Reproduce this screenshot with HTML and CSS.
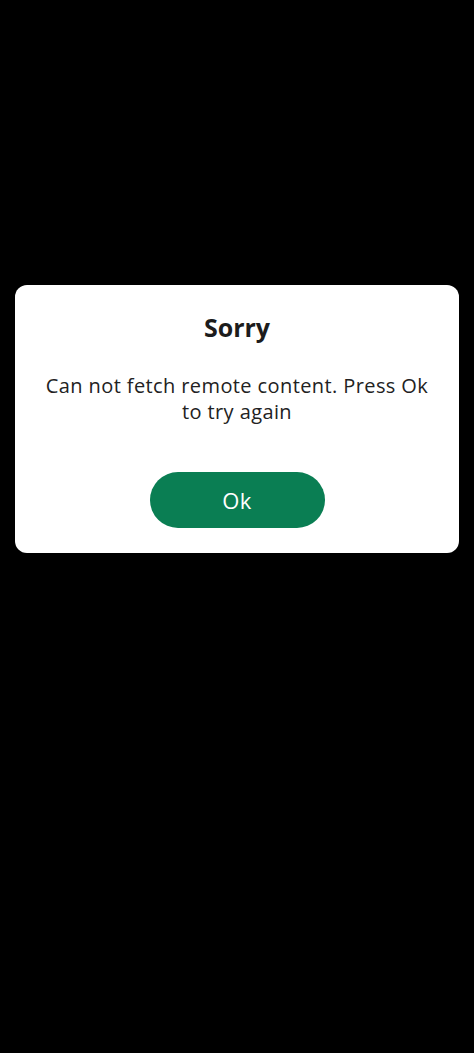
FILE: index.html
```html
<!DOCTYPE html>
<html lang="en">
<head>
    <meta charset="UTF-8">
    <meta name="viewport" content="width=device-width, initial-scale=1.0">
    <title>Sorry</title>
    <link rel="stylesheet" href="styles.css">
</head>
<body>
    <div class="dialog">
        <h2 class="dialog-title">Sorry</h2>
        <p class="dialog-message">Can not fetch remote content. Press Ok to try again</p>
        <button class="ok-btn">Ok</button>
    </div>
</body>
</html>
```

FILE: styles.css
```css
/* Base styling */
body {
    margin: 0;
    padding: 285px 15px 0;
    min-height: 1053px;
    box-sizing: border-box;
    background-color: #000;
    font-family: "Open Sans", Lato, sans-serif;
}
.dialog {
    background: #fff;
    border-radius: 12px;
    height: 268px;
    box-sizing: border-box;
    padding: 26px 30px 0;
    display: flex;
    flex-direction: column;
    align-items: center;
}
.dialog-title {
    margin: 0;
    font-size: 25px;
    font-weight: 700;
    color: #1c1c1c;
    line-height: 32px;
}
.dialog-message {
    margin: 30px 0 0;
    font-size: 20px;
    letter-spacing: 0.4px;
    line-height: 26px;
    color: #222;
    text-align: center;
}
.ok-btn {
    margin-top: 47px;
    width: 175px;
    height: 56px;
    border: none;
    border-radius: 28px;
    background-color: #0a7e53;
    color: #fff;
    font-family: inherit;
    font-size: 22px;
    letter-spacing: 0.5px;
}
```
